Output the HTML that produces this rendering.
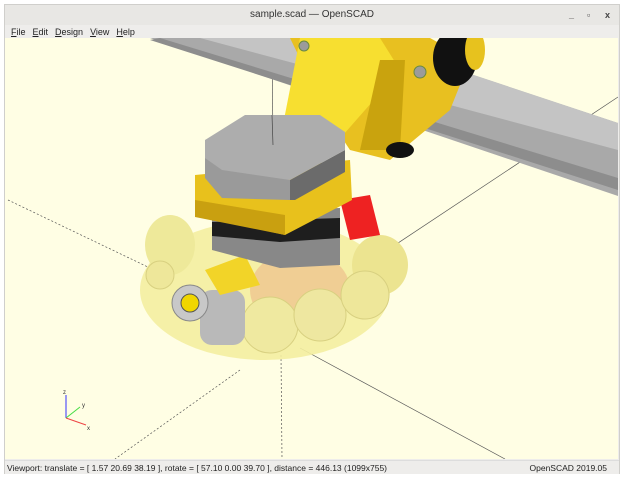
<!DOCTYPE html>
<html><head><meta charset="utf-8"><style>
*{margin:0;padding:0;box-sizing:border-box}
body{width:624px;height:478px;background:#fff;font-family:"Liberation Sans",sans-serif;overflow:hidden;position:relative}
.win{position:absolute;left:4px;top:4px;width:616px;height:470px;background:#eeedeb;border:1px solid #d0cfcc}
.title{height:20px;text-align:center;font-size:10px;line-height:20px;color:#333;position:relative;background:#e8e7e4}
.ctl{position:absolute;top:0;font-size:9px;color:#444;font-weight:bold}
.menu{height:14px;font-size:9px;line-height:14px;color:#222;padding-left:6px}
.menu span{margin-right:7px}
.menu u{text-decoration:underline}
.status{position:absolute;left:0;top:455px;width:614px;height:14px;font-size:8.5px;line-height:14px;color:#222;padding-left:2px;background:#eeedeb;border-top:1px solid #ddd}
svg{position:absolute;left:5px;top:38px}
</style></head><body>
<div class="win">
<div class="title">sample.scad — OpenSCAD<span class="ctl" style="left:564px">_</span><span class="ctl" style="left:582px">▫</span><span class="ctl" style="left:600px">x</span></div>
<div class="menu"><span><u>F</u>ile</span><span><u>E</u>dit</span><span><u>D</u>esign</span><span><u>V</u>iew</span><span><u>H</u>elp</span></div>
<div class="status">Viewport: translate = [ 1.57 20.69 38.19 ], rotate = [ 57.10 0.00 39.70 ], distance = 446.13 (1099x755)<span style="position:absolute;right:12px">OpenSCAD 2019.05</span></div>
</div>
<svg width="613" height="421" viewBox="5 38 613 421">
<rect x="5" y="38" width="613" height="421" fill="#fffee4"/>
<g stroke="#555" stroke-width="0.7" fill="none">
<line x1="272" y1="38" x2="273" y2="150"/>
<line x1="618" y1="97" x2="380" y2="255"/>
<line x1="300" y1="348" x2="505" y2="459"/>
<line x1="8" y1="200" x2="150" y2="268" stroke-dasharray="2,2"/>
<line x1="240" y1="370" x2="115" y2="459" stroke-dasharray="2,2"/>
<line x1="281" y1="355" x2="282" y2="459" stroke-dasharray="2,2"/>
</g>
<polygon points="150,38 362,38 618,123 618,196" fill="#a9a9a9"/>
<polygon points="200,38 362,38 618,123 618,150" fill="#c4c4c4"/>
<polygon points="160,38 618,178 618,190 150,40" fill="#8d8d8d"/>
<polygon points="290,38 430,38 470,60 450,110 390,160 350,150 330,120" fill="#e8c020"/>
<polygon points="300,38 380,38 400,70 330,150 300,170 280,140" fill="#f7df30"/>
<polygon points="380,60 405,60 400,150 360,150" fill="#c9a30e"/>
<ellipse cx="455" cy="58" rx="22" ry="28" fill="#111"/>
<ellipse cx="475" cy="50" rx="10" ry="20" fill="#e7c21e"/>
<ellipse cx="400" cy="150" rx="14" ry="8" fill="#111"/>
<circle cx="420" cy="72" r="6" fill="#9b9b9b" stroke="#6a8a40"/>
<circle cx="304" cy="46" r="5" fill="#9b9b9b" stroke="#6a8a40"/>
<ellipse cx="265" cy="290" rx="125" ry="70" fill="#f4eea0" opacity="0.9"/>
<ellipse cx="170" cy="245" rx="25" ry="30" fill="#eee99a"/>
<ellipse cx="380" cy="265" rx="28" ry="30" fill="#ece490"/>
<ellipse cx="300" cy="290" rx="50" ry="40" fill="#efc590" opacity="0.8"/>
<polygon points="340,200 370,195 380,235 350,240" fill="#e22"/>
<circle cx="270" cy="325" r="28" fill="#efe9a0" stroke="#d8d080"/>
<circle cx="320" cy="315" r="26" fill="#eee7a0" stroke="#d8d080"/>
<circle cx="365" cy="295" r="24" fill="#eee79a" stroke="#d8d080"/>
<circle cx="160" cy="275" r="14" fill="#eee79a" stroke="#d8d080"/>
<rect x="200" y="290" width="45" height="55" rx="12" fill="#b9b9b9"/>
<circle cx="190" cy="303" r="18" fill="#c8c8c8" stroke="#888"/>
<circle cx="190" cy="303" r="9" fill="#f0d600" stroke="#555"/>
<polygon points="205,270 245,255 260,285 220,295" fill="#f2d428"/>
<polygon points="212,212 340,208 340,265 280,268 212,250" fill="#888"/>
<polygon points="212,222 340,218 340,238 280,242 212,236" fill="#1e1e1e"/>
<polygon points="195,175 350,160 352,200 285,235 195,215" fill="#e8c11c"/>
<polygon points="195,200 285,215 285,235 195,217" fill="#c9a010"/>
<polygon points="205,158 290,180 290,200 222,198 205,178" fill="#9a9a9a"/>
<polygon points="290,180 345,150 345,172 295,200 290,200" fill="#6b6b6b"/>
<polygon points="205,140 245,115 320,115 345,132 345,150 290,180 222,170 205,158" fill="#adadad"/>
<line x1="272" y1="115" x2="273" y2="145" stroke="#444" stroke-width="0.7"/>
<g stroke-width="1" fill="none">
<line x1="66" y1="418" x2="66" y2="395" stroke="#33f"/>
<line x1="66" y1="418" x2="80" y2="407" stroke="#4d4"/>
<line x1="66" y1="418" x2="86" y2="425" stroke="#e44"/>
</g>
<text x="63" y="394" font-size="6" fill="#333">z</text>
<text x="82" y="407" font-size="6" fill="#333">y</text>
<text x="87" y="430" font-size="6" fill="#333">x</text>
</svg>
</body></html>
